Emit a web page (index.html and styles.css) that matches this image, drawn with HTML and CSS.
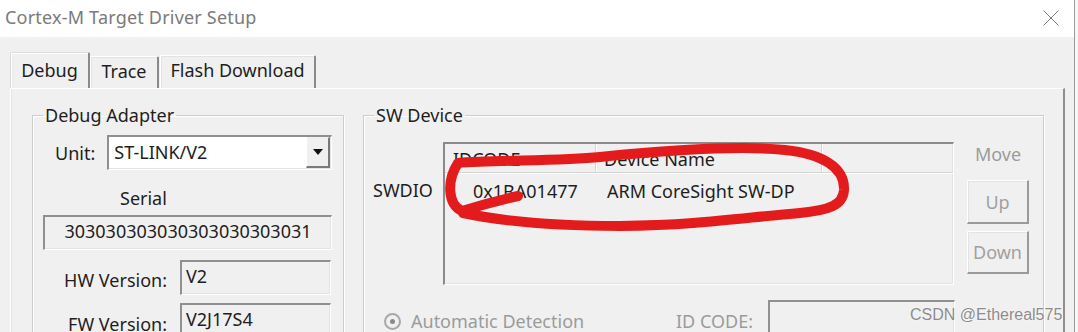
FILE: index.html
```html
<!DOCTYPE html>
<html>
<head>
<meta charset="utf-8">
<link rel="stylesheet" href="styles.css">
</head>
<body>
<div class="stage">
  <div class="window">
    <div class="titlebar">
      <span class="title">Cortex-M Target Driver Setup</span>
      <svg class="close" width="16" height="16" viewBox="0 0 16 16"><path d="M0.5 0.5 L15.5 15.5 M15.5 0.5 L0.5 15.5" stroke="#7a7a7a" stroke-width="1" fill="none"/></svg>
    </div>
    <div class="client">
      <div class="tabs">
        <div class="tab active">Debug</div>
        <div class="tab t-trace">Trace</div>
        <div class="tab t-flash">Flash Download</div>
      </div>
      <div class="panel">
        <fieldset class="group adapter">
          <legend>Debug Adapter</legend>
          <div class="unit-row">
            <span class="lbl unit-lbl">Unit:</span>
            <div class="combo">
              <span class="combo-text">ST-LINK/V2</span>
              <span class="combo-btn"><svg width="10" height="6" viewBox="0 0 10 6"><path d="M0 0 H10 L5 6 Z" fill="#111"/></svg></span>
            </div>
          </div>
          <div class="serial-lbl">Serial</div>
          <div class="field serial">303030303030303030303031</div>
          <div class="ver-row hw">
            <span class="lbl ver-lbl">HW Version:</span>
            <div class="field ver">V2</div>
          </div>
          <div class="ver-row fw">
            <span class="lbl ver-lbl">FW Version:</span>
            <div class="field ver">V2J17S4</div>
          </div>
        </fieldset>
        <fieldset class="group swdev">
          <legend>SW Device</legend>
          <div class="sw-grid">
            <span class="lbl swdio">SWDIO</span>
            <div class="table">
              <div class="thead">
                <span class="th c1">IDCODE</span>
                <span class="th c2">Device Name</span>
                <span class="th c3"></span>
              </div>
              <div class="trow">
                <span class="td c1">0x1BA01477</span>
                <span class="td c2">ARM CoreSight SW-DP</span>
              </div>
            </div>
            <div class="move">
              <div class="move-lbl">Move</div>
              <div class="btn up">Up</div>
              <div class="btn down">Down</div>
            </div>
          </div>
          <div class="detect-row">
            <span class="radio"><span class="dot"></span></span>
            <span class="dis auto">Automatic Detection</span>
            <span class="dis idlbl">ID CODE:</span>
            <div class="field idfield"></div>
          </div>
        </fieldset>
      </div>
    </div>
  </div>
  <div class="watermark">CSDN @Ethereal575</div>
  <svg class="scribble" width="1078" height="332" viewBox="0 0 1078 332">
    <path d="M518 196 C 500 200, 478 206, 462 211 C 447 204, 447 180, 458 163 C 500 160, 560 161, 600 157 C 670 150, 740 145, 785 150 C 822 154, 845 167, 844 190 C 843 205, 830 210, 800 213 C 740 218, 700 225, 620 226 C 560 226, 505 222, 463 213" stroke="#e31b1d" stroke-width="10" fill="none" stroke-linecap="round" stroke-linejoin="round"/>
  </svg>
</div>
</body>
</html>
```
FILE: styles.css
```css
html, body {
  margin: 0;
  padding: 0;
}
body {
  background: #f7f7f7;
  font-family: "Noto Sans", "Open Sans", sans-serif;
  font-size: 18px;
  color: #1e1e1e;
}
.stage {
  position: relative;
  width: 1078px;
  height: 332px;
  overflow: hidden;
}
.window {
  width: 1075px;
  height: 332px;
  border-right: 1px solid #9a9a9a;
  box-sizing: border-box;
  background: #f0f0f0;
}
.titlebar {
  height: 37px;
  background: #ffffff;
  display: flex;
  align-items: center;
  justify-content: space-between;
  padding: 0 15px 0 5px;
  box-sizing: border-box;
}
.title {
  color: #7a7a7a;
  line-height: 24px;
  margin-top: -4px;
  letter-spacing: 0.2px;
}
.close {
  margin-top: -2px;
}
.client {
  height: 295px;
  padding: 15px 0 0 10px;
  box-sizing: border-box;
  overflow: hidden;
}
.tabs {
  display: flex;
  align-items: flex-end;
  height: 36px;
}
.tab {
  box-sizing: border-box;
  height: 32px;
  line-height: 28px;
  text-align: center;
  border-top: 1px solid #ffffff;
  border-left: 1px solid #ffffff;
  border-right: 2px solid #8a8a8a;
  box-shadow: inset 1px 1px 0 #e3e3e3;
  border-radius: 2px 2px 0 0;
}
.tab.active {
  width: 80px;
  height: 36px;
  line-height: 34px;
  border-left-color: #dcdcdc;
  border-top-color: #dcdcdc;
  box-shadow: inset 1px 1px 0 #ffffff;
}
.t-trace {
  width: 69px;
}
.t-flash {
  width: 156px;
  margin-left: 1px;
  height: 33px;
}
.panel {
  width: 1055px;
  height: 300px;
  box-sizing: border-box;
  border-top: 1px solid #ffffff;
  border-left: 1px solid #ffffff;
  border-right: 2px solid #8f8f8f;
  box-shadow: inset 1px 0 0 #e3e3e3;
  display: flex;
  align-items: flex-start;
  padding: 16px 0 0 21px;
  gap: 19px;
}
.group {
  margin: 0;
  padding: 0;
  border: 1px solid #cdcdcd;
  box-shadow: inset 1px 1px 0 #ffffff, 1px 1px 0 #ffffff;
  min-width: 0;
  box-sizing: border-box;
  height: 260px;
}
.group legend {
  padding: 0 2px;
  margin-left: 10px;
  line-height: 20px;
  height: 20px;
}
.adapter {
  width: 312px;
}
.swdev {
  width: 681px;
}
.lbl {
  line-height: 24px;
}
.unit-row {
  display: flex;
  align-items: center;
  margin-top: 10px;
  padding-left: 22px;
  gap: 12px;
}
.combo {
  width: 225px;
  height: 35px;
  box-sizing: border-box;
  background: #ffffff;
  border-top: 2px solid #8f8f8f;
  border-left: 2px solid #8f8f8f;
  border-bottom: 1px solid #ffffff;
  border-right: 1px solid #ffffff;
  box-shadow: inset -1px -1px 0 #e3e3e3;
  display: flex;
  justify-content: space-between;
  align-items: stretch;
}
.combo-text {
  padding-left: 5px;
  line-height: 30px;
}
.combo-btn {
  width: 24px;
  background: #f0f0f0;
  border-top: 1px solid #f0f0f0;
  border-left: 1px solid #ffffff;
  border-right: 2px solid #7a7a7a;
  border-bottom: 2px solid #7a7a7a;
  box-sizing: border-box;
  display: flex;
  align-items: center;
  justify-content: center;
  margin: 0 1px 1px 0;
}
.serial-lbl {
  margin-top: 16px;
  padding-left: 87px;
  line-height: 24px;
}
.field {
  box-sizing: border-box;
  height: 35px;
  background: #f0f0f0;
  border-top: 2px solid #909090;
  border-left: 2px solid #909090;
  border-bottom: 1px solid #ffffff;
  border-right: 1px solid #ffffff;
  box-shadow: inset -1px -1px 0 #e3e3e3;
  line-height: 28px;
}
.serial {
  margin: 5px 0 0 10px;
  width: 289px;
  text-align: center;
}
.ver-row {
  display: flex;
  align-items: center;
  gap: 13px;
}
.ver-row.hw {
  margin-top: 10px;
}
.ver-row.fw {
  margin-top: 8px;
}
.ver-lbl {
  width: 134px;
  text-align: right;
  margin-top: 4px;
}
.fw .ver-lbl {
  margin-top: 6px;
}
.field.ver {
  width: 151px;
  padding-left: 4px;
}
.sw-grid {
  display: grid;
  grid-template-columns: 79px 524px 62px;
  margin-top: 17px;
}
.swdio {
  padding-left: 9px;
  margin-top: 36px;
}
.table {
  width: 511px;
  height: 143px;
  box-sizing: border-box;
  border-top: 2px solid #8a8a8a;
  border-left: 2px solid #8a8a8a;
  border-bottom: 1px solid #ffffff;
  border-right: 1px solid #ffffff;
  box-shadow: inset -1px -1px 0 #e3e3e3;
  margin-right: 13px;
}
.thead {
  display: flex;
  height: 28px;
  border-bottom: 1px solid #d5d5d5;
  box-shadow: 0 1px 0 #ffffff;
}
.th {
  box-sizing: border-box;
  line-height: 30px;
  height: 28px;
  overflow: hidden;
  border-right: 1px solid #d5d5d5;
  box-shadow: 1px 0 0 #ffffff;
  padding-left: 8px;
}
.th.c1 { width: 151px; }
.th.c2 { width: 226px; }
.th.c3 { width: 129px; border-right: 0; box-shadow: none; }
.trow {
  display: flex;
  height: 36px;
  line-height: 36px;
}
.td.c1 {
  width: 151px;
  padding-left: 28px;
  box-sizing: border-box;
}
.td.c2 {
  padding-left: 11px;
}
.move {
  display: flex;
  flex-direction: column;
  align-items: stretch;
}
.move-lbl {
  line-height: 24px;
  text-align: center;
  color: #9b9b9b;
}
.btn {
  box-sizing: border-box;
  background: #f0f0f0;
  border-top: 1px solid #ffffff;
  border-left: 1px solid #ffffff;
  border-right: 2px solid #9a9a9a;
  border-bottom: 2px solid #9a9a9a;
  box-shadow: inset 1px 1px 0 #e3e3e3;
  text-align: center;
  color: #a0a0a0;
}
.btn.up {
  margin-top: 14px;
  height: 44px;
  line-height: 42px;
}
.btn.down {
  margin-top: 7px;
  height: 43px;
  line-height: 41px;
}
.detect-row {
  display: flex;
  align-items: flex-start;
  margin-top: 15px;
  padding-left: 20px;
}
.radio {
  width: 13px;
  height: 13px;
  border-radius: 50%;
  border: 2px solid #a8a8a8;
  display: flex;
  align-items: center;
  justify-content: center;
  margin-top: 13px;
}
.dot {
  width: 5px;
  height: 5px;
  border-radius: 50%;
  background: #8a8a8a;
}
.dis {
  color: #9b9b9b;
  line-height: 24px;
  margin-top: 9px;
}
.auto {
  margin-left: 10px;
  width: 265px;
}
.idlbl {
  width: 92px;
}
.field.idfield {
  width: 187px;
  height: 40px;
}
.watermark {
  position: absolute;
  left: 910px;
  top: 305px;
  font-family: "Liberation Sans", Arial, sans-serif;
  font-size: 16px;
  color: #8c8c8c;
  line-height: 20px;
  text-shadow: 0 0 2px #ffffff;
}
.scribble {
  position: absolute;
  left: 0;
  top: 0;
  pointer-events: none;
}
```
